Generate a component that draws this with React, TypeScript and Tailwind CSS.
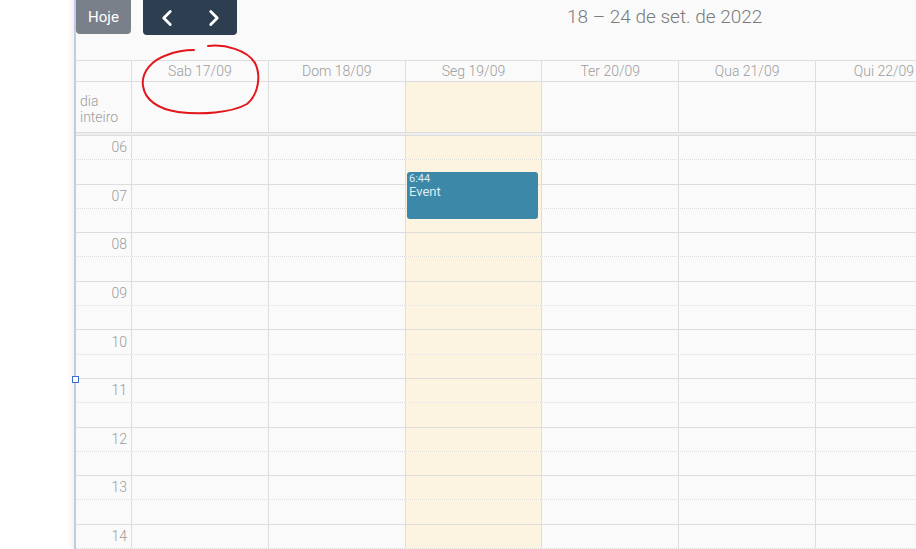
import { ChevronLeft, ChevronRight } from 'lucide-react';

const days = ['Sab 17/09', 'Dom 18/09', 'Seg 19/09', 'Ter 20/09', 'Qua 21/09', 'Qui 22/09', 'Sex 23/09'];
const hours = ['06', '07', '08', '09', '10', '11', '12', '13', '14', '15'];
const TODAY = 2;

const cols = 'grid grid-cols-[55px_repeat(7,136.8px)]';

function SlotRow({ label, half }: { label?: string; half: 'top' | 'bottom' }) {
  return (
    <div
      className={`${cols} h-[24.3px] border-b border-[#dddddd] ${
        half === 'top' ? 'border-dotted' : 'border-solid'
      }`}
    >
      <div className="flex items-center justify-end pr-[4px] text-[14px] font-light text-[#9c9c9c]">
        {label}
      </div>
      {days.map((d, i) => (
        <div
          key={d}
          className={`border-l border-[#dddddd] ${i === TODAY ? 'bg-[#fcf4e1]' : ''}`}
        />
      ))}
    </div>
  );
}

export default function App() {
  return (
    <div className="relative flex w-[916px] h-[549px] overflow-hidden bg-white font-['Roboto',sans-serif]">
      {/* left page margin */}
      <div className="w-[68px] shrink-0" />
      <div className="w-[6px] shrink-0 bg-gradient-to-r from-white to-[#fdeeee]" />
      <div className="w-[2px] shrink-0 bg-[#b9cfe8]" />

      {/* calendar */}
      <div className="relative flex-1 bg-[#fafafa]">
        {/* toolbar */}
        <div className="flex items-start h-[60px]">
          <button className="w-[55px] h-[34px] rounded-b-[4px] bg-[#7a808a] text-[15px] text-white">
            Hoje
          </button>
          <div className="ml-[12px] flex w-[94px] h-[35px] rounded-b-[4px] bg-[#2c3e50] text-white">
            <button className="flex-1 flex items-center justify-center">
              <ChevronLeft size={26} strokeWidth={2.6} />
            </button>
            <button className="flex-1 flex items-center justify-center">
              <ChevronRight size={26} strokeWidth={2.6} />
            </button>
          </div>
          <h2 className="ml-[330px] mt-[3px] whitespace-nowrap text-[19px] font-light text-[#7b7b7b]">
            18 – 24 de set. de 2022
          </h2>
        </div>

        <div className="w-[1013px]">
          {/* day header */}
          <div className={`${cols} h-[22px] border-y border-[#dddddd]`}>
            <div />
            {days.map((d) => (
              <div
                key={d}
                className="border-l border-[#dddddd] text-center text-[14px] leading-[20px] font-light text-[#9c9c9c]"
              >
                {d}
              </div>
            ))}
          </div>

          {/* all day row */}
          <div className={`${cols} h-[50px]`}>
            <div className="pl-[4px] pt-[11px] text-[14px] leading-[16px] font-light text-[#9c9c9c]">
              dia
              <br />
              inteiro
            </div>
            {days.map((d, i) => (
              <div
                key={d}
                className={`border-l border-[#dddddd] ${i === TODAY ? 'bg-[#fcf4e1]' : ''}`}
              />
            ))}
          </div>

          {/* divider */}
          <div className="h-[4px] border-y border-[#dddddd] bg-[#eeeeee]" />

          {/* time grid */}
          <div className="relative">
            {hours.map((h) => (
              <div key={h}>
                <SlotRow label={h} half="top" />
                <SlotRow half="bottom" />
              </div>
            ))}

            {/* event */}
            <div className="absolute left-[331px] top-[36px] w-[131px] h-[47px] rounded-[3px] bg-[#3b88a9] px-[2px] text-[#dcecf4]">
              <div className="text-[11px] leading-[13px]">6:44</div>
              <div className="text-[13px] leading-[14px]">Event</div>
            </div>
          </div>
        </div>
      </div>

      {/* selection handle */}
      <div className="absolute left-[72px] top-[376px] w-[7px] h-[7px] border border-[#3d6fcf] bg-white" />

      {/* red annotation */}
      <svg
        className="absolute left-0 top-0 pointer-events-none"
        width={916}
        height={549}
        viewBox="0 0 916 549"
        fill="none"
      >
        <path
          d="M208 46 C225 44 247 50 255 63 C261 75 259 94 247 104 C231 113 201 115 178 112 C158 109 145 100 143 86 C141 72 152 60 167 55 C177 51 186 50 194 50"
          stroke="#e3161b"
          strokeWidth={2}
          strokeLinecap="round"
        />
      </svg>
    </div>
  );
}
